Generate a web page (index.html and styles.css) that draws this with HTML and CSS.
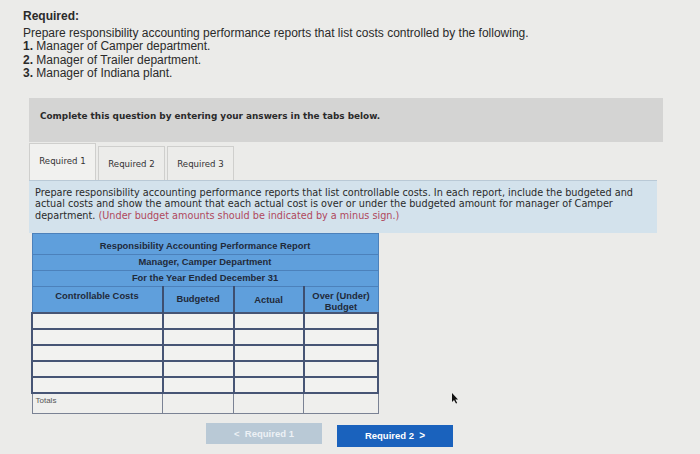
FILE: index.html
```html
<!DOCTYPE html>
<html>
<head>
<meta charset="utf-8">
<link rel="stylesheet" href="styles.css">
</head>
<body>
<div class="page">
  <div class="required">
    <div class="req-title">Required:</div>
    <div>Prepare responsibility accounting performance reports that list costs controlled by the following.</div>
    <div><b>1.</b> Manager of Camper department.</div>
    <div><b>2.</b> Manager of Trailer department.</div>
    <div><b>3.</b> Manager of Indiana plant.</div>
  </div>

  <div class="complete">Complete this question by entering your answers in the tabs below.</div>

  <div class="tabs">
    <div class="tab active">Required 1</div>
    <div class="tab">Required 2</div>
    <div class="tab">Required 3</div>
  </div>

  <div class="instructions"><span class="plain">Prepare responsibility accounting performance reports that list controllable costs. In each report, include the budgeted and actual costs and show the amount that each actual cost is over or under the budgeted amount for manager of Camper department.</span> <span class="red">(Under budget amounts should be indicated by a minus sign.)</span></div>

  <table class="report">
    <tr class="title t1"><td colspan="4">Responsibility Accounting Performance Report</td></tr>
    <tr class="title t2"><td colspan="4">Manager, Camper Department</td></tr>
    <tr class="title t3"><td colspan="4">For the Year Ended December 31</td></tr>
    <tr class="colhead">
      <td class="c1"><div class="lbl">Controllable Costs</div></td>
      <td class="c2"><div class="lbl">Budgeted</div></td>
      <td class="c3"><div class="lbl">Actual</div></td>
      <td class="c4"><div class="lbl">Over (Under)<br>Budget</div></td>
    </tr>
    <tr class="data"><td></td><td></td><td></td><td></td></tr>
    <tr class="data"><td></td><td></td><td></td><td></td></tr>
    <tr class="data"><td></td><td></td><td></td><td></td></tr>
    <tr class="data"><td></td><td></td><td></td><td></td></tr>
    <tr class="data"><td></td><td></td><td></td><td></td></tr>
    <tr class="totals"><td>Totals</td><td></td><td></td><td></td></tr>
  </table>

  <div class="nav">
    <div class="btn prev">&lt;&nbsp; Required 1</div>
    <div class="btn next">Required 2 &nbsp;<span class="chev">&gt;</span></div>
  </div>

  <svg class="cursor" width="8" height="11" viewBox="0 0 8 11"><path d="M1 0 L1 9 L3 7 L5 10.5 L6.2 9.9 L4.3 6.6 L7 6.4 Z" fill="#111"/></svg>
</div>
</body>
</html>
```
FILE: styles.css
```css
html, body {
  margin: 0;
  padding: 0;
  background: #ebebe9;
}
.page {
  position: relative;
  width: 700px;
  height: 454px;
  overflow: hidden;
  background: #ebebe9;
}
.required {
  padding: 10px 0 0 23px;
  font-family: "Liberation Sans", Arial, sans-serif;
  font-size: 12px;
  line-height: 13.6px;
  color: #2a2a2a;
}
.req-title {
  font-weight: bold;
  margin-bottom: 3px;
}
.complete {
  margin: 17px 0 0 29px;
  width: 634px;
  height: 44px;
  box-sizing: border-box;
  padding: 13px 0 0 11px;
  background: #d4d4d3;
  font-family: "DejaVu Sans", Verdana, sans-serif;
  font-weight: bold;
  font-size: 8.9px;
  color: #2a2a2a;
}
.tabs {
  display: flex;
  align-items: flex-end;
  gap: 2px;
  margin: 0 0 0 29px;
  height: 38px;
}
.tab {
  width: 67px;
  height: 34px;
  box-sizing: border-box;
  border: 1px solid #cfcfcd;
  border-bottom: none;
  background: #ececea;
  font-family: "DejaVu Sans", Verdana, sans-serif;
  font-size: 8.6px;
  color: #333;
  padding-top: 12px;
  text-align: center;
}
.tab.active {
  height: 37px;
  padding-top: 12px;
  background: #f1f1ef;
}
.instructions {
  margin: 0 0 0 29px;
  width: 628px;
  height: 53px;
  box-sizing: border-box;
  padding: 6px 6px 0 6px;
  background: #d3e2ec;
  border-top: 1px solid #b9c9d6;
  font-family: "DejaVu Sans", Verdana, sans-serif;
  font-size: 9.7px;
  line-height: 11.5px;
  color: #2a2a2a;
}
.red {
  color: #b0485c;
}
.report {
  margin: 0 0 0 31px;
  width: 348px;
  border-collapse: collapse;
  font-family: "Liberation Sans", Arial, sans-serif;
  font-weight: bold;
  font-size: 9.4px;
  line-height: 10px;
  color: #1f2a3a;
}
.report td {
  padding: 0;
}
.title td {
  background: #5f9fdc;
  text-align: center;
  vertical-align: middle;
  border: 1px solid #4c81bb;
}
.t1 td { height: 16px; padding-top: 4px; }
.t2 td { height: 15px; }
.t3 td { height: 15px; }
.colhead td {
  background: #5f9fdc;
  height: 23px;
  text-align: center;
  vertical-align: top;
  border: 1px solid #4c81bb;
  border-left: 2px solid #3e4f70;
  line-height: 11px;
}
.colhead td.c1 { border-left: 1px solid #4c81bb; }
.lbl { padding-top: 3px; }
.c2 .lbl { padding-top: 6px; }
.c3 .lbl { padding-top: 7px; }
.c1 { width: 129px; }
.c2 { width: 69px; }
.c3 { width: 68px; }
.data td {
  height: 14px;
  background: #f2f2f0;
  border: 2px solid #475575;
}
.totals td {
  height: 17px;
  background: #efefed;
  border: 1px solid #7a8294;
  font-weight: normal;
  font-size: 8px;
  color: #555;
  padding-left: 3px;
  vertical-align: top;
  padding-top: 2px;
}
.nav {
  display: flex;
  gap: 15px;
  margin: 9px 0 0 206px;
}
.btn {
  width: 116px;
  height: 21px;
  box-sizing: border-box;
  text-align: center;
  font-family: "Liberation Sans", Arial, sans-serif;
  font-weight: bold;
  font-size: 9.5px;
  line-height: 21px;
  color: #fff;
}
.prev {
  background: #b9c9d6;
  color: #edf1f5;
}
.next {
  background: #1a62bd;
  margin-top: 2px;
  height: 22px;
  line-height: 22px;
}
.chev {
  font-size: 10px;
}
.cursor {
  position: absolute;
  left: 451px;
  top: 393px;
}
```
